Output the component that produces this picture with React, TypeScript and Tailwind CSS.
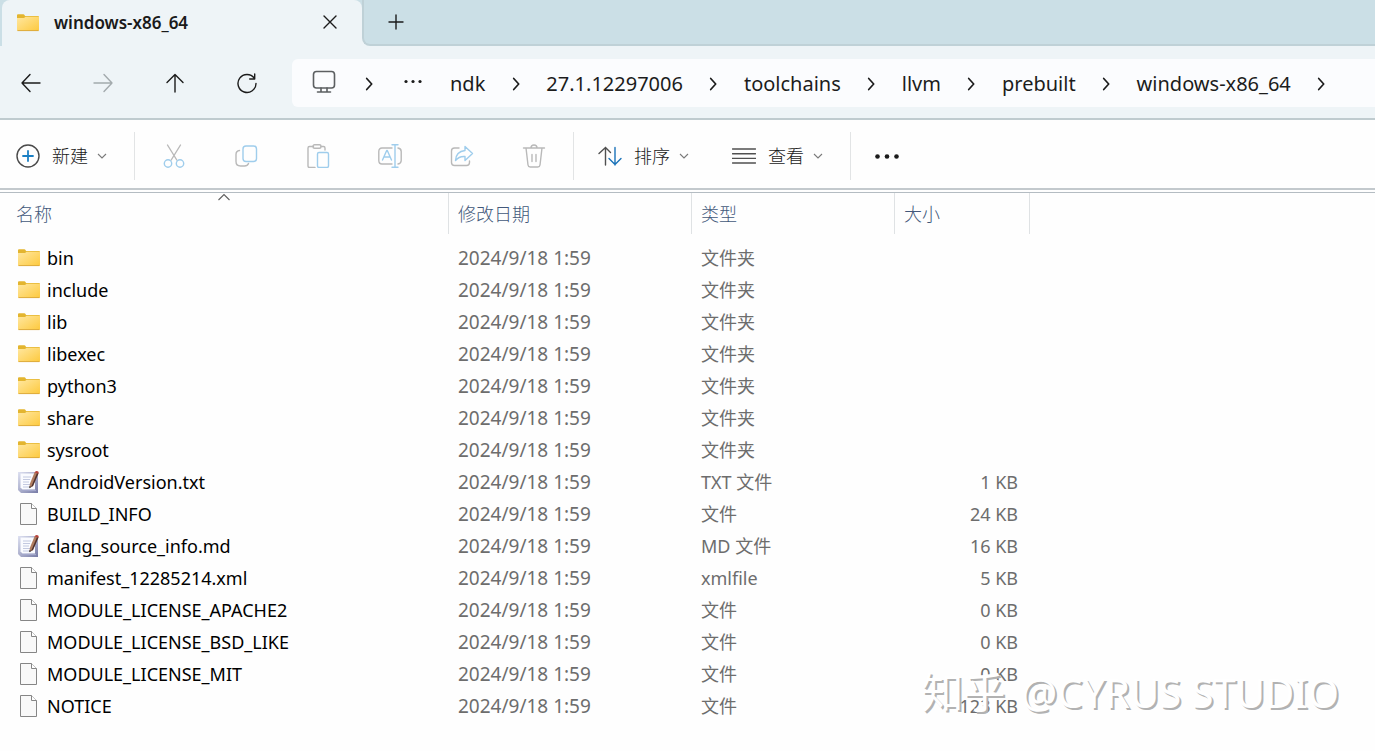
import type { ReactNode } from "react";

type Kind = "folder" | "note" | "file";

interface Entry {
  name: string;
  kind: Kind;
  type: string;
  size?: string;
}

const MODIFIED = "2024/9/18 1:59";

const entries: Entry[] = [
  { name: "bin", kind: "folder", type: "文件夹" },
  { name: "include", kind: "folder", type: "文件夹" },
  { name: "lib", kind: "folder", type: "文件夹" },
  { name: "libexec", kind: "folder", type: "文件夹" },
  { name: "python3", kind: "folder", type: "文件夹" },
  { name: "share", kind: "folder", type: "文件夹" },
  { name: "sysroot", kind: "folder", type: "文件夹" },
  { name: "AndroidVersion.txt", kind: "note", type: "TXT 文件", size: "1 KB" },
  { name: "BUILD_INFO", kind: "file", type: "文件", size: "24 KB" },
  { name: "clang_source_info.md", kind: "note", type: "MD 文件", size: "16 KB" },
  { name: "manifest_12285214.xml", kind: "file", type: "xmlfile", size: "5 KB" },
  { name: "MODULE_LICENSE_APACHE2", kind: "file", type: "文件", size: "0 KB" },
  { name: "MODULE_LICENSE_BSD_LIKE", kind: "file", type: "文件", size: "0 KB" },
  { name: "MODULE_LICENSE_MIT", kind: "file", type: "文件", size: "0 KB" },
  { name: "NOTICE", kind: "file", type: "文件", size: "123 KB" },
];

const crumbs = ["ndk", "27.1.12297006", "toolchains", "llvm", "prebuilt", "windows-x86_64"];

const GRAY = "#b9b9b9";
const BLUE = "#9fcdec";

function Icon({ children, stroke = "#1b1b1b", width = 1.4 }: { children: ReactNode; stroke?: string; width?: number }) {
  return (
    <svg
      className="size-6 shrink-0"
      viewBox="0 0 24 24"
      fill="none"
      stroke={stroke}
      strokeWidth={width}
      strokeLinecap="round"
      strokeLinejoin="round"
      aria-hidden="true"
    >
      {children}
    </svg>
  );
}

function FolderIcon() {
  return (
    <svg className="h-6 w-6 shrink-0" viewBox="0 0 24 24" aria-hidden="true">
      <defs>
        <linearGradient id="folder-front" x1="0" y1="0" x2="1" y2="1">
          <stop offset="0" stopColor="#ffe7a0" />
          <stop offset="1" stopColor="#fdc93d" />
        </linearGradient>
      </defs>
      <path d="M1 4.2a1 1 0 0 1 1-1h5.3a1 1 0 0 1 .8.4l1 1.4H22a1 1 0 0 1 1 1V9H1Z" fill="#e3b52f" />
      <path d="M1 7h7l1.5-1.2H23V19a1 1 0 0 1-1 1H2a1 1 0 0 1-1-1Z" fill="url(#folder-front)" />
      <path d="M1.5 19.6h21" stroke="#d9a63a" strokeWidth="0.9" />
    </svg>
  );
}

function FileIcon() {
  return (
    <svg className="h-6 w-6 shrink-0" viewBox="0 0 24 24" aria-hidden="true">
      <path d="M3.5 1.5h11l5 5v16h-16Z" fill="#f9f9f9" stroke="#868686" />
      <path d="M14.5 1.5v5h5" fill="#fff" stroke="#868686" />
    </svg>
  );
}

function NoteIcon() {
  return (
    <svg className="h-6 w-6 shrink-0" viewBox="0 0 24 24" aria-hidden="true">
      <defs>
        <linearGradient id="note-back" x1="0" y1="0" x2="1" y2="1">
          <stop offset="0" stopColor="#dfe2f2" />
          <stop offset="1" stopColor="#777ba6" />
        </linearGradient>
      </defs>
      <path d="M1 2h18l2 2v19H4l-3-3Z" fill="url(#note-back)" />
      <path d="M3.5 3.5H18v16H5.5l-2-2Z" fill="#fafbff" />
      <path d="M6 7h8M6 9.5h7M6 12h6M6 14.5h7M6 17h8" stroke="#bcc3dc" strokeWidth="0.9" />
      <path d="M5 20.5h14" stroke="#a4a8cc" strokeWidth="1.2" />
      <path d="M17.5 2.5l4 1-5.5 12.500-3.500 2 .3-4Z" fill="#b07d60" />
      <path d="M20 3l1.500.5-5.500 12.500-2 1.200Z" fill="#4d302c" />
      <path d="M17.400 2.600l1.300-1.400q1.900-.4 3 .9l-.2 1.700Z" fill="#b8433a" />
      <path d="M12.300 18.300l.2-2.400 1.700 1.100Z" fill="#222" />
    </svg>
  );
}

const kindIcon: Record<Kind, ReactNode> = {
  folder: <FolderIcon />,
  note: <NoteIcon />,
  file: <FileIcon />,
};

function Chevron() {
  return (
    <Icon width={1.7}>
      <path d="M9.7 7.500l5 5.500-5 5.500" />
    </Icon>
  );
}

function DownCaret() {
  return (
    <svg className="h-3 w-3 shrink-0" viewBox="0 0 12 12" fill="none" stroke="#7a7a7a" strokeWidth="1.1" aria-hidden="true">
      <path d="M2 4l4 4 4-4" />
    </svg>
  );
}

function Separator() {
  return <div className="h-12 w-px shrink-0 bg-[#e2e4e5]" />;
}

function NavButton({ label, disabled, children }: { label: string; disabled?: boolean; children: ReactNode }) {
  return (
    <button type="button" aria-label={label} disabled={disabled} className="flex h-12 w-12 items-center justify-center">
      {children}
    </button>
  );
}

const editTools: { label: string; icon: ReactNode }[] = [
  {
    label: "剪切",
    icon: (
      <>
        <path d="M5.500 1l9.300 15M18.500 1L9.200 16" />
        <circle cx="6" cy="19.500" r="3.700" stroke={BLUE} />
        <circle cx="18" cy="19.500" r="3.700" stroke={BLUE} />
      </>
    ),
  },
  {
    label: "复制",
    icon: (
      <>
        <path d="M5.500 6.500q-3.500.5-3.500 4v7q0 4.500 4.500 4.500h4q3 0 4-2.500" />
        <rect x="9" y="2" width="13.500" height="15.500" rx="3" stroke={BLUE} />
      </>
    ),
  },
  {
    label: "粘贴",
    icon: (
      <>
        <path d="M7.500 2.500H3.500q-1.500 0-1.500 1.500v18q0 1.500 1.500 1.500H9M15 2.500h2.500q1.500 0 1.500 1.500v2" />
        <rect x="7" y="0.800" width="8" height="3.400" rx="1.500" />
        <rect x="11.500" y="8.500" width="11" height="15" rx="1.500" stroke={BLUE} />
      </>
    ),
  },
  {
    label: "重命名",
    icon: (
      <>
        <path d="M14 4H4Q.8 4 .8 7.500v9Q.8 20 4 20h10M20 4q3.200.5 3.200 3.500v9q0 3-3.200 3.500" />
        <path d="M4.500 16L8.700 6.500h.6L13.500 16M6 13h6M17 .8v22.400M14 .8h6M14 23.200h6" stroke={BLUE} />
      </>
    ),
  },
  {
    label: "共享",
    icon: (
      <>
        <path d="M9 4H4.500Q1.500 4 1.500 7v11.500q0 3 3 3h12q3 0 3-3V17" />
        <path d="M15 2.500l7.500 7-7.500 7v-4q-6-.5-9.500 4 .5-9 9.500-10Z" stroke={BLUE} />
      </>
    ),
  },
  {
    label: "删除",
    icon: (
      <path d="M1.500 4h21M4 4l2 17q.3 2 2.200 2h7.600q1.900 0 2.200-2l2-17M9 4q0-3 3-3t3 3M10 10.500v7M14 10.500v7" />
    ),
  },
];

const columns: { label: string; width: string; pad: string }[] = [
  { label: "名称", width: "w-[449px]", pad: "pl-4" },
  { label: "修改日期", width: "w-[243px]", pad: "pl-[9px]" },
  { label: "类型", width: "w-[203px]", pad: "pl-[9px]" },
  { label: "大小", width: "w-[135px]", pad: "pl-[9px]" },
];

function TabBar() {
  return (
    <div className="flex h-[46px] bg-[#eef4f7]">
      <div className="w-0.5 shrink-0 bg-[#cbdfe6]" />
      <div className="w-[360px] shrink-0 bg-[#cbdfe6]">
        <div className="flex h-full items-center rounded-t-lg bg-[#eef4f7] pl-[14px]">
          <FolderIcon />
          <span className="ml-[14px] text-[17px] leading-6 font-semibold text-[#1a1a1a]">windows-x86_64</span>
          <button type="button" aria-label="关闭标签页" className="mr-5 ml-auto flex size-6 items-center justify-center">
            <Icon>
              <path d="M6 5l12 12M18 5L6 17" />
            </Icon>
          </button>
        </div>
      </div>
      <div className="flex flex-1 items-center rounded-bl-lg border-b-2 border-l-2 border-[#bfd1d7] bg-[#cbdfe6] pl-5">
        <button type="button" aria-label="新建标签页" className="flex size-6 items-center justify-center">
          <Icon>
            <path d="M12 5v14M5 12h14" />
          </Icon>
        </button>
      </div>
    </div>
  );
}

function AddressRow() {
  return (
    <div className="flex items-center border-b-2 border-[#bfcbcf] bg-[#eef4f7] pt-[13px] pb-[11px] pl-[7px]">
      <div className="flex shrink-0 gap-6">
        <NavButton label="后退">
          <Icon>
            <path d="M3 12h18M11 3.500L3 12l8 8.500" />
          </Icon>
        </NavButton>
        <NavButton label="前进" disabled>
          <Icon stroke="#a3aaad">
            <path d="M3 12h18M13 3.500l8 8.500-8 8.500" />
          </Icon>
        </NavButton>
        <NavButton label="上移">
          <Icon>
            <path d="M12 21V3.500M4 11.500l8-8 8 8" />
          </Icon>
        </NavButton>
        <NavButton label="刷新">
          <Icon>
            <path d="M19.300 7.200A9 9 0 1 0 21 12.500M19.700 3v5h-5" />
          </Icon>
        </NavButton>
      </div>
      <nav aria-label="地址" className="ml-[21px] flex h-12 flex-1 items-center rounded-l-md bg-[#fbfcfe] pl-5 text-[20px] text-[#1c1c1c]">
        <button type="button" aria-label="此电脑" className="shrink-0 pb-0.5">
          <Icon stroke="#5c5f61" width={1.6}>
            <rect x="1.500" y="1.500" width="21" height="16.500" rx="3" />
            <path d="M9 18v3.500M15 18v3.500M5.500 22h13" />
          </Icon>
        </button>
        <span className="flex w-[66px] shrink-0 justify-center">
          <Chevron />
        </span>
        <button type="button" aria-label="更多路径" className="mr-[25px] -ml-px shrink-0 pb-1">
          <svg className="h-6 w-6" viewBox="0 0 24 24" fill="#1b1b1b" aria-hidden="true">
            <circle cx="5" cy="12.500" r="1.600" />
            <circle cx="12" cy="12.500" r="1.600" />
            <circle cx="19" cy="12.500" r="1.600" />
          </svg>
        </button>
        {crumbs.map((crumb) => (
          <span key={crumb} className="flex shrink-0 items-center">
            <button type="button" className="pt-0.5">{crumb}</button>
            <span className="flex w-[61px] justify-center">
              <Chevron />
            </span>
          </span>
        ))}
      </nav>
    </div>
  );
}

function Toolbar() {
  return (
    <div className="flex items-center border-b-2 border-[#c3c9cd] bg-[#fefefe] pt-3 pb-2 text-[18px] font-light text-[#1a1a1a]">
      <button type="button" className="ml-4 flex items-center">
        <Icon stroke="#4a4a4a">
          <circle cx="12" cy="12" r="11" />
          <path d="M12 7v10M7 12h10" stroke="#1a7fc4" strokeWidth="1.8" />
        </Icon>
        <span className="mr-2 ml-3">新建</span>
        <DownCaret />
      </button>
      <div className="ml-[26px] flex">
        <Separator />
      </div>
      <div className="mx-[3px] flex">
        {editTools.map((tool) => (
          <button key={tool.label} type="button" aria-label={tool.label} disabled className="flex h-12 w-[72px] items-center justify-center">
            <Icon stroke={GRAY}>{tool.icon}</Icon>
          </button>
        ))}
      </div>
      <Separator />
      <button type="button" className="ml-6 flex items-center">
        <Icon stroke="#505050">
          <path d="M7.500 21V3.500M1 9.500l6.500-6 5 5" />
          <path d="M17 3.500V21M11 14.500l6 6 6-6" stroke="#1a72b8" />
        </Icon>
        <span className="mr-2 ml-3">排序</span>
        <DownCaret />
      </button>
      <button type="button" className="ml-[42px] flex items-center">
        <Icon stroke="#505050">
          <path d="M.5 5h23M.5 9.700h23M.5 14.400h23M.5 19h23" />
        </Icon>
        <span className="mr-2 ml-3">查看</span>
        <DownCaret />
      </button>
      <div className="ml-[26px] flex">
        <Separator />
      </div>
      <button type="button" aria-label="更多选项" className="ml-6">
        <svg className="h-6 w-6" viewBox="0 0 24 24" fill="#1b1b1b" aria-hidden="true">
          <circle cx="2.500" cy="12.500" r="2.300" />
          <circle cx="12" cy="12.500" r="2.300" />
          <circle cx="21.500" cy="12.500" r="2.300" />
        </svg>
      </button>
    </div>
  );
}

function FileTable() {
  return (
    <div className="mt-0.5 border-t border-[#b4bcc2]">
      <table className="w-[1030px] table-fixed border-collapse text-[18px] leading-6 text-[#6d6d6d]">
        <thead>
          <tr>
            {columns.map((column, index) => (
              <th key={column.label} scope="col" className={`p-0 pb-2 text-left font-light text-[#42587a] ${column.width}`}>
                <div className={`relative flex h-[41px] items-center border-r border-[#dfe2e4] ${column.pad}`}>
                  <button type="button">{column.label}</button>
                  {index === 0 && (
                    <svg
                      className="absolute inset-x-0 top-0 mx-auto h-2 w-3"
                      viewBox="0 0 12 8"
                      fill="none"
                      stroke="#5e5e5e"
                      strokeWidth="1.1"
                      aria-hidden="true"
                    >
                      <path d="M.5 7L6 1.500 11.500 7" />
                    </svg>
                  )}
                </div>
              </th>
            ))}
          </tr>
        </thead>
        <tbody>
          {entries.map((entry) => (
            <tr key={entry.name} className="h-8">
              <td className="p-0 pl-[17px]">
                <div className="flex items-center gap-1.5 text-black">
                  {kindIcon[entry.kind]}
                  <span>{entry.name}</span>
                </div>
              </td>
              <td className="p-0 pl-[9px] text-[19px]">{MODIFIED}</td>
              <td className="p-0 pl-[9px]">{entry.type}</td>
              <td className="p-0 pr-3 text-right">{entry.size}</td>
            </tr>
          ))}
        </tbody>
      </table>
    </div>
  );
}

export default function App() {
  return (
    <div className="relative min-h-screen overflow-hidden bg-[#fefefe] font-['Noto_Sans','Noto_Sans_CJK_SC',sans-serif]">
      <TabBar />
      <AddressRow />
      <Toolbar />
      <FileTable />
      <div className="pointer-events-none absolute right-9 bottom-7 flex items-baseline gap-4 text-[40px] leading-[60px] whitespace-nowrap text-white [text-shadow:2px_2px_0_#b2b2b2]">
        <span className="text-[42px]">知乎</span>
        <span>@CYRUS STUDIO</span>
      </div>
    </div>
  );
}
